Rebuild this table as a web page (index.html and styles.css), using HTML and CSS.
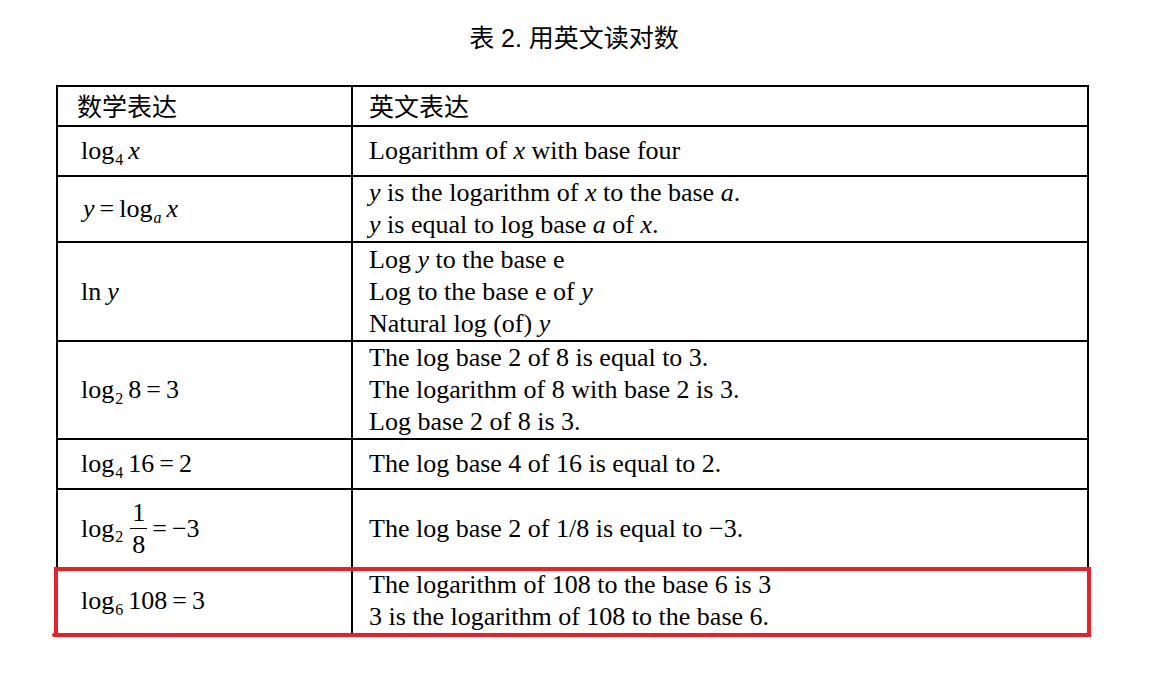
FILE: index.html
```html
<!DOCTYPE html>
<html lang="zh">
<head>
<meta charset="utf-8">
<title>表 2. 用英文读对数</title>
<link rel="stylesheet" href="styles.css">
</head>
<body>
<div class="page">
  <h1 class="title">表 2. 用英文读对数</h1>
  <div class="wrap">
    <div class="grid">
      <div class="cell head c1"><p>数学表达</p></div>
      <div class="cell head c2"><p>英文表达</p></div>

      <div class="cell math"><p>log<sub>4</sub><i class="sp">x</i></p></div>
      <div class="cell text"><p>Logarithm of <i>x</i> with base four</p></div>

      <div class="cell math m2"><p><i>y</i><span class="eq">=</span>log<sub><i>a</i></sub><i class="sp">x</i></p></div>
      <div class="cell text"><p><i>y</i> is the logarithm of <i>x</i> to the base <i>a</i>.</p><p><i>y</i> is equal to log base <i>a</i> of <i>x</i>.</p></div>

      <div class="cell math"><p>ln<i class="sp2">y</i></p></div>
      <div class="cell text"><p>Log <i>y</i> to the base e</p><p>Log to the base e of <i>y</i></p><p>Natural log (of) <i>y</i></p></div>

      <div class="cell math"><p>log<sub>2</sub><span class="sp">8</span><span class="eq">=</span>3</p></div>
      <div class="cell text"><p>The log base 2 of 8 is equal to 3.</p><p>The logarithm of 8 with base 2 is 3.</p><p>Log base 2 of 8 is 3.</p></div>

      <div class="cell math"><p>log<sub>4</sub><span class="sp">16</span><span class="eq">=</span>2</p></div>
      <div class="cell text"><p>The log base 4 of 16 is equal to 2.</p></div>

      <div class="cell math"><p class="fracrow">log<sub>2</sub><span class="frac"><span class="num">1</span><span class="den">8</span></span><span class="eq">=</span>&minus;3</p></div>
      <div class="cell text"><p>The log base 2 of 1/8 is equal to &minus;3.</p></div>

      <div class="cell math"><p>log<sub>6</sub><span class="sp">108</span><span class="eq">=</span>3</p></div>
      <div class="cell text"><p>The logarithm of 108 to the base 6 is 3</p><p>3 is the logarithm of 108 to the base 6.</p></div>
    </div>
    <div class="highlight"></div>
  </div>
</div>
</body>
</html>
```

FILE: styles.css
```css
html, body {
  margin: 0;
  padding: 0;
  background: #ffffff;
}

.page {
  width: 1160px;
  height: 683px;
  padding-left: 56px;
  box-sizing: border-box;
  color: #000;
  font-family: "Liberation Serif", "Times New Roman", serif;
}

.title {
  width: 1033px;
  margin: 23px 0 32px;
  height: 30px;
  line-height: 30px;
  text-align: center;
  font-family: "Liberation Sans", "Noto Sans CJK SC", sans-serif;
  font-weight: normal;
  font-size: 25px;
  padding-left: 3px;
  box-sizing: border-box;
}

.wrap {
  position: relative;
  width: 1033px;
}

.grid {
  display: grid;
  grid-template-columns: 295px 736px;
  grid-template-rows: 40px 50px 66px 99px 98px 50px 79px 66px;
  border-left: 2px solid #000;
  border-top: 2px solid #000;
}

.cell {
  box-sizing: border-box;
  border-right: 2px solid #000;
  border-bottom: 2px solid #000;
  display: flex;
  flex-direction: column;
  justify-content: center;
  font-size: 26px;
  line-height: 32px;
  white-space: nowrap;
}

.cell p {
  margin: 0;
}

.head {
  font-family: "Noto Sans CJK SC", sans-serif;
  font-size: 25px;
  line-height: 30px;
  padding-bottom: 3px;
}

.head.c1 {
  padding-left: 19px;
}

.head.c2 {
  padding-left: 16px;
}

.math {
  padding-left: 23px;
}

.math.m2 {
  padding-left: 25px;
}

.fracrow {
  display: flex;
  align-items: center;
}

.text {
  padding-left: 16px;
}

i {
  font-style: italic;
}

sub {
  font-size: 16px;
  line-height: 0;
  position: relative;
  top: 6px;
  vertical-align: baseline;
  margin-left: 1px;
}

.fracrow sub {
  top: 8px;
}

.sp {
  margin-left: 5px;
}

.sp2 {
  margin-left: 6px;
}

.eq {
  margin: 0 5px;
}

.frac {
  display: inline-flex;
  flex-direction: column;
  align-items: center;
  margin-left: 7px;
  line-height: 27px;
}

.frac .num {
  border-bottom: 1px solid #000;
  padding: 0 2px 2px;
}

.frac .den {
  padding: 2px 2px 0;
}

.highlight {
  position: absolute;
  left: -2px;
  right: -2px;
  bottom: -2px;
  height: 70px;
  border: 4px solid #e3222a;
  box-sizing: border-box;
}

.highlight::after {
  content: "";
  position: absolute;
  left: -6px;
  bottom: -4px;
  width: 8px;
  height: 4px;
  background: #e3222a;
  border-radius: 2px 0 0 2px;
}
```
